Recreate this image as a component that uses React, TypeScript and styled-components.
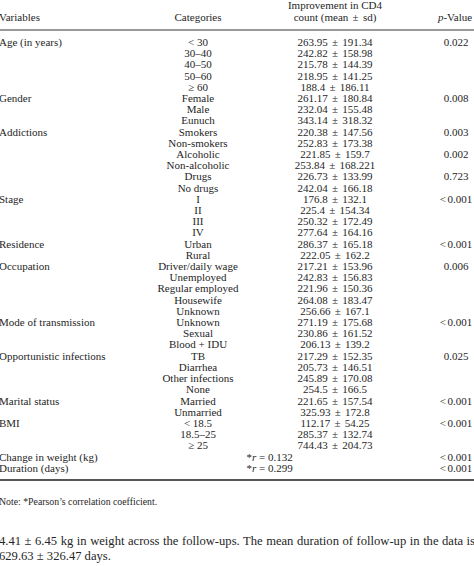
import React from "react";
import styled, { createGlobalStyle } from "styled-components";

const Global = createGlobalStyle`
  html, body { margin: 0; padding: 0; background: #fff; }
  body { font-family: "Liberation Serif", "Times New Roman", serif; color: #262626; }
`;

const Page = styled.div`
  width: 474px;
  overflow: hidden;
`;

const Table = styled.div`
  display: grid;
  grid-template-columns: 140px 116px 158px 1fr;
  font-size: 11px;
  margin-top: -1px;
`;

const Head = styled.div<{ $center?: boolean }>`
  line-height: 12px;
  display: flex;
  flex-direction: column;
  justify-content: flex-end;
  align-items: ${(p) => (p.$center ? "center" : "flex-start")};
  padding-bottom: 6px;
  border-bottom: 2px solid #9a9a9a;
  white-space: nowrap;
`;

const PHead = styled(Head)`
  align-items: center;
  padding-left: 22px;
`;

const Cell = styled.div<{ $first?: boolean; $last?: boolean }>`
  line-height: 11.2px;
  white-space: nowrap;
  display: flex;
  padding-top: ${(p) => (p.$first ? "6px" : "0")};
  padding-bottom: ${(p) => (p.$last ? "5px" : "0")};
  border-bottom: ${(p) => (p.$last ? "2px solid #555" : "none")};
`;

const VarCell = styled(Cell)`
  justify-content: flex-start;
  margin-left: -1px;
`;

const CatCell = styled(Cell)`
  justify-content: center;
`;

const ValCell = styled(Cell)`
  justify-content: center;
`;

const RCell = styled(Cell)`
  grid-column: 2 / 4;
  justify-content: center;
  padding-right: 15px;
`;

const PCell = styled(Cell)`
  justify-content: center;
  padding-left: 24px;
`;

const Pm = styled.span`
  margin: 0 1.5px;
`;

const Lt = styled.span`
  margin-right: -1px;
`;

const Note = styled.div`
  font-size: 9.8px;
  line-height: 11px;
  margin-top: 15px;
  margin-left: -1px;
`;

const Para = styled.p`
  font-size: 12.6px;
  line-height: 15px;
  margin: 27px 0 0 -1px;
  width: 476px;
  text-align: justify;
  text-align-last: left;
`;

type Row = { cat: string; val: string; p?: string };
type Group = { label: string; rows: Row[] };

const groups: Group[] = [
  {
    label: "Age (in years)",
    rows: [
      { cat: "< 30", val: "263.95 ± 191.34", p: "0.022" },
      { cat: "30–40", val: "242.82 ± 158.98" },
      { cat: "40–50", val: "215.78 ± 144.39" },
      { cat: "50–60", val: "218.95 ± 141.25" },
      { cat: "≥ 60", val: "188.4 ± 186.11" },
    ],
  },
  {
    label: "Gender",
    rows: [
      { cat: "Female", val: "261.17 ± 180.84", p: "0.008" },
      { cat: "Male", val: "232.04 ± 155.48" },
      { cat: "Eunuch", val: "343.14 ± 318.32" },
    ],
  },
  {
    label: "Addictions",
    rows: [
      { cat: "Smokers", val: "220.38 ± 147.56", p: "0.003" },
      { cat: "Non-smokers", val: "252.83 ± 173.38" },
      { cat: "Alcoholic", val: "221.85 ± 159.7", p: "0.002" },
      { cat: "Non-alcoholic", val: "253.84 ± 168.221" },
      { cat: "Drugs", val: "226.73 ± 133.99", p: "0.723" },
      { cat: "No drugs", val: "242.04 ± 166.18" },
    ],
  },
  {
    label: "Stage",
    rows: [
      { cat: "I", val: "176.8 ± 132.1", p: "< 0.001" },
      { cat: "II", val: "225.4 ± 154.34" },
      { cat: "III", val: "250.32 ± 172.49" },
      { cat: "IV", val: "277.64 ± 164.16" },
    ],
  },
  {
    label: "Residence",
    rows: [
      { cat: "Urban", val: "286.37 ± 165.18", p: "< 0.001" },
      { cat: "Rural", val: "222.05 ± 162.2" },
    ],
  },
  {
    label: "Occupation",
    rows: [
      { cat: "Driver/daily wage", val: "217.21 ± 153.96", p: "0.006" },
      { cat: "Unemployed", val: "242.83 ± 156.83" },
      { cat: "Regular employed", val: "221.96 ± 150.36" },
      { cat: "Housewife", val: "264.08 ± 183.47" },
      { cat: "Unknown", val: "256.66 ± 167.1" },
    ],
  },
  {
    label: "Mode of transmission",
    rows: [
      { cat: "Unknown", val: "271.19 ± 175.68", p: "< 0.001" },
      { cat: "Sexual", val: "230.86 ± 161.52" },
      { cat: "Blood + IDU", val: "206.13 ± 139.2" },
    ],
  },
  {
    label: "Opportunistic infections",
    rows: [
      { cat: "TB", val: "217.29 ± 152.35", p: "0.025" },
      { cat: "Diarrhea", val: "205.73 ± 146.51" },
      { cat: "Other infections", val: "245.89 ± 170.08" },
      { cat: "None", val: "254.5 ± 166.5" },
    ],
  },
  {
    label: "Marital status",
    rows: [
      { cat: "Married", val: "221.65 ± 157.54", p: "< 0.001" },
      { cat: "Unmarried", val: "325.93 ± 172.8" },
    ],
  },
  {
    label: "BMI",
    rows: [
      { cat: "< 18.5", val: "112.17 ± 54.25", p: "< 0.001" },
      { cat: "18.5–25", val: "285.37 ± 132.74" },
      { cat: "≥ 25", val: "744.43 ± 204.73" },
    ],
  },
];

const corr = [
  { label: "Change in weight (kg)", r: "0.132", p: "< 0.001" },
  { label: "Duration (days)", r: "0.299", p: "< 0.001" },
];

function Val({ text }: { text: string }) {
  const [a, b] = text.split(" ± ");
  return (
    <span>
      {a} <Pm>±</Pm> {b}
    </span>
  );
}

function PVal({ text }: { text: string }) {
  if (text.startsWith("< ")) {
    return (
      <span>
        <Lt>&lt;</Lt> {text.slice(2)}
      </span>
    );
  }
  return <span>{text}</span>;
}

export default function App() {
  const flat: { label: string; row: Row }[] = [];
  groups.forEach((g) =>
    g.rows.forEach((r, i) => flat.push({ label: i === 0 ? g.label : "", row: r }))
  );
  return (
    <Page>
      <Global />
      <Table>
        <Head>
          <VarHeadText>Variables</VarHeadText>
        </Head>
        <Head $center>Categories</Head>
        <Head $center>
          <span>Improvement in CD4</span>
          <span>
            count (mean <Pm>±</Pm> sd)
          </span>
        </Head>
        <PHead>
          <span>
            <i>p</i>-Value
          </span>
        </PHead>
        {flat.map((f, i) => (
          <React.Fragment key={i}>
            <VarCell $first={i === 0}>{f.label}</VarCell>
            <CatCell $first={i === 0}>{f.row.cat}</CatCell>
            <ValCell $first={i === 0}>
              <Val text={f.row.val} />
            </ValCell>
            <PCell $first={i === 0}>{f.row.p ? <PVal text={f.row.p} /> : ""}</PCell>
          </React.Fragment>
        ))}
        {corr.map((c, i) => {
          const last = i === corr.length - 1;
          return (
            <React.Fragment key={c.label}>
              <VarCell $last={last}>{c.label}</VarCell>
              <RCell $last={last}>
                <span>
                  *<i>r</i> = {c.r}
                </span>
              </RCell>
              <PCell $last={last}>
                <PVal text={c.p} />
              </PCell>
            </React.Fragment>
          );
        })}
      </Table>
      <Note>Note: *Pearson’s correlation coefficient.</Note>
      <Para>
        4.41 ± 6.45 kg in weight across the follow-ups. The mean duration of follow-up in the data is 629.63 ± 326.47
        days.
      </Para>
    </Page>
  );
}

const VarHeadText = styled.span`
  margin-left: -1px;
`;
